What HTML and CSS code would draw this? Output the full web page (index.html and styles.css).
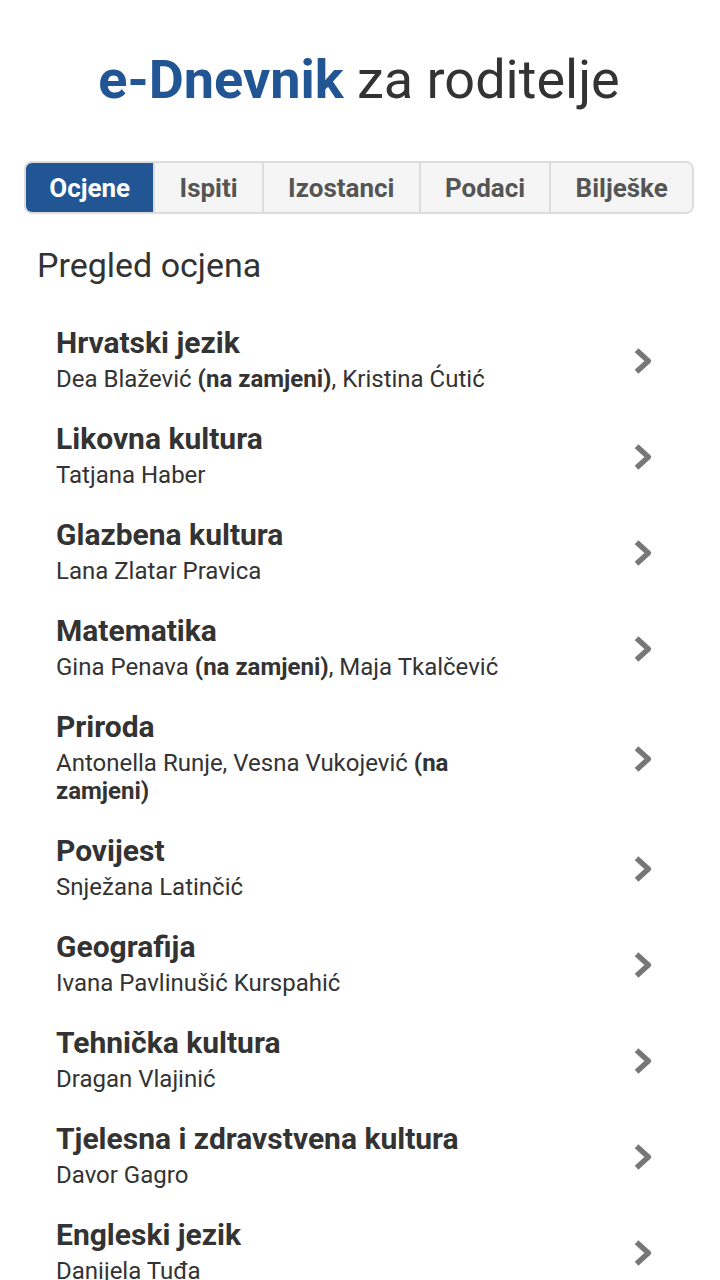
FILE: index.html
```html
<!DOCTYPE html>
<html lang="hr">
<head>
  <meta charset="UTF-8">
  <meta name="viewport" content="width=device-width, initial-scale=1.0">
  <title>e-Dnevnik za roditelje</title>
  <link rel="stylesheet" href="styles.css">
</head>
<body>
  <header>
    <h1><span class="brand">e-Dnevnik</span> za roditelje</h1>
  </header>
  <nav class="tabs">
    <a href="#" class="active">Ocjene</a>
    <a href="#">Ispiti</a>
    <a href="#">Izostanci</a>
    <a href="#">Podaci</a>
    <a href="#">Bilješke</a>
  </nav>
  <main>
    <h2>Pregled ocjena</h2>
    <ul class="subjects">
      <li>
        <a href="#">
          <div class="info">
            <div class="name">Hrvatski jezik</div>
            <div class="teachers">Dea Blažević <strong>(na zamjeni)</strong>, Kristina Ćutić</div>
          </div>
          <svg class="chevron" viewBox="0 0 20 26"><path d="M4 3 L15 13 L4 23"/></svg>
        </a>
      </li>
      <li>
        <a href="#">
          <div class="info">
            <div class="name">Likovna kultura</div>
            <div class="teachers">Tatjana Haber</div>
          </div>
          <svg class="chevron" viewBox="0 0 20 26"><path d="M4 3 L15 13 L4 23"/></svg>
        </a>
      </li>
      <li>
        <a href="#">
          <div class="info">
            <div class="name">Glazbena kultura</div>
            <div class="teachers">Lana Zlatar Pravica</div>
          </div>
          <svg class="chevron" viewBox="0 0 20 26"><path d="M4 3 L15 13 L4 23"/></svg>
        </a>
      </li>
      <li>
        <a href="#">
          <div class="info">
            <div class="name">Matematika</div>
            <div class="teachers">Gina Penava <strong>(na zamjeni)</strong>, Maja Tkalčević</div>
          </div>
          <svg class="chevron" viewBox="0 0 20 26"><path d="M4 3 L15 13 L4 23"/></svg>
        </a>
      </li>
      <li>
        <a href="#">
          <div class="info">
            <div class="name">Priroda</div>
            <div class="teachers">Antonella Runje, Vesna Vukojević <strong>(na zamjeni)</strong></div>
          </div>
          <svg class="chevron" viewBox="0 0 20 26"><path d="M4 3 L15 13 L4 23"/></svg>
        </a>
      </li>
      <li>
        <a href="#">
          <div class="info">
            <div class="name">Povijest</div>
            <div class="teachers">Snježana Latinčić</div>
          </div>
          <svg class="chevron" viewBox="0 0 20 26"><path d="M4 3 L15 13 L4 23"/></svg>
        </a>
      </li>
      <li>
        <a href="#">
          <div class="info">
            <div class="name">Geografija</div>
            <div class="teachers">Ivana Pavlinušić Kurspahić</div>
          </div>
          <svg class="chevron" viewBox="0 0 20 26"><path d="M4 3 L15 13 L4 23"/></svg>
        </a>
      </li>
      <li>
        <a href="#">
          <div class="info">
            <div class="name">Tehnička kultura</div>
            <div class="teachers">Dragan Vlajinić</div>
          </div>
          <svg class="chevron" viewBox="0 0 20 26"><path d="M4 3 L15 13 L4 23"/></svg>
        </a>
      </li>
      <li>
        <a href="#">
          <div class="info">
            <div class="name">Tjelesna i zdravstvena kultura</div>
            <div class="teachers">Davor Gagro</div>
          </div>
          <svg class="chevron" viewBox="0 0 20 26"><path d="M4 3 L15 13 L4 23"/></svg>
        </a>
      </li>
      <li>
        <a href="#">
          <div class="info">
            <div class="name">Engleski jezik</div>
            <div class="teachers">Danijela Tuđa</div>
          </div>
          <svg class="chevron" viewBox="0 0 20 26"><path d="M4 3 L15 13 L4 23"/></svg>
        </a>
      </li>
    </ul>
  </main>
</body>
</html>
```

FILE: styles.css
```css
:root {
  --blue: #225594;
  --text: #333333;
  --tab-bg: #f5f5f5;
  --tab-border: #dddddd;
  --tab-text: #555555;
  --chevron: #777777;
}
body {
  font-family: Roboto, "Liberation Sans", sans-serif;
  color: var(--text);
  background: #ffffff;
  margin: 0;
  padding: 0 26px 0 24px;
}
header h1 {
  margin: 50px 0 52px 0;
  font-size: 54px;
  line-height: 59px;
  font-weight: 400;
  text-align: center;
}
.brand {
  color: var(--blue);
  font-weight: 700;
}
.tabs {
  display: flex;
  height: 53px;
  box-sizing: border-box;
  border: 2px solid var(--tab-border);
  border-radius: 8px;
  background: var(--tab-bg);
  overflow: hidden;
}
.tabs a {
  flex: 1 1 auto;
  display: flex;
  align-items: center;
  justify-content: center;
  padding: 0 14px;
  font-size: 26px;
  font-weight: 700;
  color: var(--tab-text);
  text-decoration: none;
  border-left: 2px solid var(--tab-border);
}
.tabs a:first-child {
  border-left: none;
}
.tabs a.active {
  background: var(--blue);
  color: #ffffff;
  margin: -2px 0 -2px -2px;
  padding-left: 15px;
  padding-right: 13px;
}
main h2 {
  margin: 31px 0 28px 13px;
  font-size: 34px;
  line-height: 40px;
  font-weight: 400;
}
.subjects {
  list-style: none;
  margin: 0;
  padding: 0 0 0 32px;
}
.subjects a {
  display: flex;
  align-items: center;
  padding: 12px 0 16px 0;
  color: var(--text);
  text-decoration: none;
}
.info {
  flex: 0 1 460px;
}
.name {
  font-size: 30px;
  line-height: 36px;
  font-weight: 700;
}
.teachers {
  margin-top: 4px;
  font-size: 24px;
  line-height: 28px;
}
.teachers strong {
  font-weight: 700;
}
.chevron {
  width: 22px;
  height: 28px;
  margin: 4px 40px 0 auto;
  fill: none;
  stroke: var(--chevron);
  stroke-width: 5;
  stroke-linejoin: round;
}
```
